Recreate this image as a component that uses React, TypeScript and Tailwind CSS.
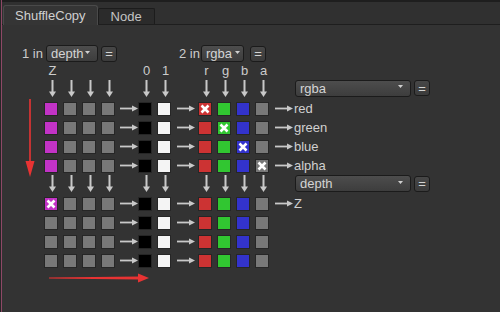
import React from "react";

const GRAY = "bg-[#787878]";
const MAG = "bg-[#c233c6]";

function DownArrow() {
  return (
    <svg width="7" height="17" viewBox="0 0 7 17" className="block">
      <rect x="2.5" y="0" width="2" height="12" fill="#c9c9c9" />
      <path d="M0 11.5 H7 L3.5 17 Z" fill="#c9c9c9" />
    </svg>
  );
}

function RightArrow() {
  return (
    <svg width="18" height="7" viewBox="0 0 18 7" className="block">
      <rect x="0" y="2.6" width="13" height="1.8" fill="#c9c9c9" />
      <path d="M12 0.5 L18 3.5 L12 6.5 Z" fill="#c9c9c9" />
    </svg>
  );
}

function Box({ color, x }: { color: string; x?: boolean }) {
  return (
    <div
      className={`w-[12px] h-[12px] ${color} outline outline-1 outline-[#262626] flex items-center justify-center`}
    >
      {x && (
        <svg width="10" height="10" viewBox="0 0 10 10" className="block">
          <path d="M1.5 1.5 L8.5 8.5 M8.5 1.5 L1.5 8.5" stroke="#ffffff" strokeWidth="2.6" />
        </svg>
      )}
    </div>
  );
}

function Cell({ children, center }: { children?: React.ReactNode; center?: boolean }) {
  return (
    <div className={`w-[15px] flex ${center ? "justify-center" : "justify-start"}`}>
      {children}
    </div>
  );
}

function Drop({ label, w, pr = "pr-[6px]" }: { label: string; w: string; pr?: string }) {
  return (
    <div
      className={`${w} h-[17px] flex items-center justify-between pl-[4px] ${pr} rounded-[3px] border border-[#1b1b1b] bg-gradient-to-b from-[#4d4d4d] to-[#3d3d3d] text-[#d4d4d4] leading-none`}
    >
      <span>{label}</span>
      <svg width="5" height="3" viewBox="0 0 5 3" className="block -mt-[3px]">
        <path d="M0 0 H5 L2.5 3 Z" fill="#d0d0d0" />
      </svg>
    </div>
  );
}

function Eq() {
  return (
    <div className="w-[16px] h-[16px] flex items-center justify-center rounded-[3px] border border-[#1b1b1b] bg-gradient-to-b from-[#474747] to-[#3b3b3b] text-[#d4d4d4] leading-none">
      =
    </div>
  );
}

// one matrix line: group A (4) · gap · group B (2) · gap · group C (4) · gap · right side
function Line({
  a,
  b,
  c,
  g1,
  g2,
  g3,
  right,
  className,
}: {
  a: React.ReactNode[];
  b: React.ReactNode[];
  c: React.ReactNode[];
  g1?: React.ReactNode;
  g2?: React.ReactNode;
  g3?: React.ReactNode;
  right?: React.ReactNode;
  className: string;
}) {
  return (
    <div className={`flex pl-[43px] ${className}`}>
      <div className="flex gap-[4px]">{a}</div>
      <div className="w-[22px] pl-[3px] flex items-center">{g1}</div>
      <div className="flex gap-[4px]">{b}</div>
      <div className="w-[26px] pl-[4px] flex items-center">{g2}</div>
      <div className="flex gap-[4px]">{c}</div>
      <div className="w-[23px] pl-[4px] flex items-center">{g3}</div>
      {right}
    </div>
  );
}

const downs = (n: number) =>
  Array.from({ length: n }, (_, i) => (
    <Cell key={i} center>
      <DownArrow />
    </Cell>
  ));

function BoxLine({
  row,
  first,
  label,
}: {
  row: number;
  first: string;
  label?: string;
}) {
  const a = [first, GRAY, GRAY, GRAY].map((col, i) => (
    <Cell key={i}>
      <Box color={col} x={label === "Z" && i === 0} />
    </Cell>
  ));
  const b = ["bg-black", "bg-[#f4f4f4]"].map((col, i) => (
    <Cell key={i}>
      <Box color={col} />
    </Cell>
  ));
  const c = ["bg-[#cc3333]", "bg-[#31c631]", "bg-[#3333cc]", GRAY].map((col, i) => (
    <Cell key={i}>
      <Box color={col} x={row === i} />
    </Cell>
  ));
  return (
    <Line
      className="h-[19px] items-center"
      a={a}
      b={b}
      c={c}
      g1={<RightArrow />}
      g2={<RightArrow />}
      g3={label ? <RightArrow /> : null}
      right={label ? <span className="leading-none text-[#d0d0d0]">{label}</span> : null}
    />
  );
}

export default function App() {
  const labelRow = (chars: string[]) =>
    chars.map((t, i) => (
      <Cell key={i} center>
        <span className="leading-[13px]">{t}</span>
      </Cell>
    ));

  return (
    <div className="relative w-[500px] h-[312px] overflow-hidden bg-[#262626] pl-px font-['Liberation_Sans',Arial,sans-serif] text-[13px] text-[#cccccc]">
      <div className="h-full border-l border-[#8e4866] bg-[#333333]">
        {/* tab bar */}
        <div className="h-[25px] border-t-2 border-b border-[#1e1e1e] bg-[#303030] flex items-end pl-px">
          <div className="h-[20px] -mb-px px-[11px] pt-[3px] bg-[#353535] border border-b-0 border-[#4a4a4a] rounded-t-[3px] text-[#d0d0d0] leading-none">
            ShuffleCopy
          </div>
          <div className="h-[16px] px-[12px] pt-[1px] bg-[#2b2b2b] border border-b-0 border-[#1c1c1c] rounded-t-[2px] text-[#c4c4c4] leading-none">
            Node
          </div>
        </div>

        {/* in selectors */}
        <div className="mt-[20px] h-[17px] flex items-center pl-[20px]">
          <span className="leading-none">1 in</span>
          <div className="ml-[3px]">
            <Drop label="depth" w="w-[52px]" pr="pr-[7px]" />
          </div>
          <div className="ml-[3px]">
            <Eq />
          </div>
          <span className="ml-[62px] leading-none">2 in</span>
          <div className="ml-[1px]">
            <Drop label="rgba" w="w-[43px]" pr="pr-[3px]" />
          </div>
          <div className="ml-[6px]">
            <Eq />
          </div>
        </div>

        {/* column labels */}
        <Line
          className="mt-[2px] h-[13px] items-center"
          a={labelRow(["Z", "", "", ""])}
          b={labelRow(["0", "1"])}
          c={labelRow(["r", "g", "b", "a"])}
        />

        {/* arrows + rgba out */}
        <Line
          className="h-[22px] items-center"
          a={downs(4)}
          b={downs(2)}
          c={downs(4)}
          right={
            <div className="ml-px flex items-center gap-[3px]">
              <Drop label="rgba" w="w-[116px]" pr="pr-[7px]" />
              <Eq />
            </div>
          }
        />
        <BoxLine row={0} first={MAG} label="red" />
        <BoxLine row={1} first={MAG} label="green" />
        <BoxLine row={2} first={MAG} label="blue" />
        <BoxLine row={3} first={MAG} label="alpha" />

        {/* arrows + depth out */}
        <Line
          className="h-[19px] items-start"
          a={downs(4)}
          b={downs(2)}
          c={downs(4)}
          right={
            <div className="ml-px flex items-center gap-[3px]">
              <Drop label="depth" w="w-[116px]" pr="pr-[7px]" />
              <Eq />
            </div>
          }
        />
        <BoxLine row={-1} first={MAG} label="Z" />
        <BoxLine row={-1} first={GRAY} />
        <BoxLine row={-1} first={GRAY} />
        <BoxLine row={-1} first={GRAY} />
      </div>

      {/* red annotation arrows */}
      <svg width="10" height="78" viewBox="0 0 10 78" className="absolute left-[25px] top-[99px]">
        <rect x="4.2" y="0" width="1.6" height="66" fill="#e83333" />
        <path d="M0.5 62 H9.5 L5 78 Z" fill="#e83333" />
      </svg>
      <svg width="100" height="10" viewBox="0 0 100 10" className="absolute left-[49px] top-[273px]">
        <path d="M0 4.6 L90 3.4 L90 6.6 L0 5.4 Z" fill="#e83333" />
        <path d="M89 0.5 L100 5 L89 9.5 Z" fill="#e83333" />
      </svg>
    </div>
  );
}
